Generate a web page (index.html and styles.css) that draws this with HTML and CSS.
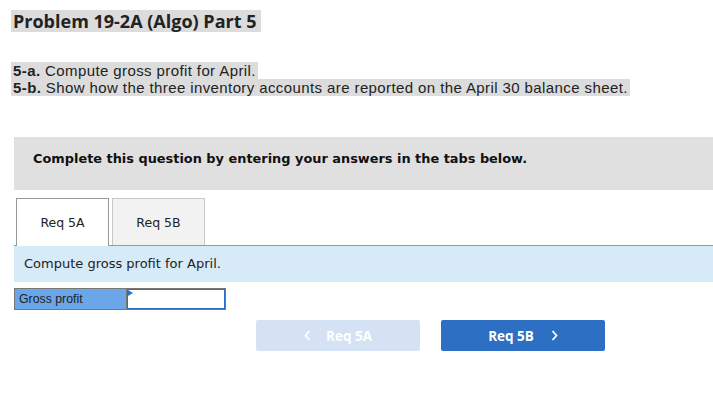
FILE: index.html
```html
<!DOCTYPE html>
<html>
<head>
<meta charset="utf-8">
<link rel="stylesheet" href="styles.css">
</head>
<body>
<div class="page">
  <h1 class="title">Problem 19-2A (Algo) Part 5</h1>
  <div class="intro">
    <div class="line"><b>5-a.</b> Compute gross profit for April.</div>
    <div class="line"><b>5-b.</b> Show how the three inventory accounts are reported on the April 30 balance sheet.</div>
  </div>
  <div class="instructions">Complete this question by entering your answers in the tabs below.</div>
  <div class="tabs">
    <div class="tab active">Req 5A</div>
    <div class="tab">Req 5B</div>
  </div>
  <div class="panel">Compute gross profit for April.</div>
  <div class="entry">
    <div class="label">Gross profit</div>
    <div class="input"><span class="marker"></span></div>
  </div>
  <div class="nav">
    <button class="btn prev"><svg class="chev" width="7" height="11" viewBox="0 0 7 11"><path d="M5.5 1 L1.5 5.5 L5.5 10" fill="none" stroke="#fff" stroke-width="1.8"/></svg><span>Req 5A</span></button>
    <button class="btn next"><span>Req 5B</span><svg class="chev" width="7" height="11" viewBox="0 0 7 11"><path d="M1.5 1 L5.5 5.5 L1.5 10" fill="none" stroke="#fff" stroke-width="1.8"/></svg></button>
  </div>
</div>
</body>
</html>
```
FILE: styles.css
```css
html, body {
  margin: 0;
  padding: 0;
  background: #fff;
}
.page {
  width: 713px;
  padding-top: 10px;
  font-family: "Open Sans", "Liberation Sans", sans-serif;
  color: #222;
}
.title {
  display: block;
  width: fit-content;
  margin: 0 0 0 11px;
  padding: 0 5px 0 2px;
  height: 22px;
  line-height: 22px;
  font-size: 18px;
  font-weight: 700;
  background: #dcdcdc;
}
.intro {
  margin: 30px 0 0 11px;
  font-family: "Liberation Sans", Arial, sans-serif;
  font-size: 15px;
  letter-spacing: 0.4px;
}
.line {
  width: fit-content;
  height: 17px;
  line-height: 17px;
  padding: 0 2px;
  background: #dcdcdc;
}
.instructions {
  margin: 41px 0 0 14px;
  height: 53px;
  box-sizing: border-box;
  padding: 14px 0 0 19px;
  background: #e0e0e0;
  font-family: "DejaVu Sans", Verdana, sans-serif;
  font-weight: 700;
  font-size: 12.9px;
  line-height: 15px;
  color: #111;
}
.tabs {
  display: flex;
  gap: 3px;
  margin: 8px 0 0 14px;
  padding-left: 2px;
  border-bottom: 1px solid #999;
  height: 47px;
}
.tab {
  width: 91px;
  height: 46px;
  box-sizing: content-box;
  border: 1px solid #c8c8c8;
  border-bottom: none;
  background: #f2f2f2;
  font-family: "DejaVu Sans", Verdana, sans-serif;
  font-size: 12.5px;
  display: flex;
  align-items: center;
  justify-content: center;
  color: #222;
}
.tab.active {
  background: #fff;
  border-color: #999;
  height: 47px;
  margin-bottom: -1px;
}
.panel {
  margin-left: 14px;
  height: 36px;
  line-height: 36px;
  padding-left: 10px;
  background: #d7eaf8;
  font-family: "DejaVu Sans", Verdana, sans-serif;
  font-size: 13px;
  color: #222;
}
.entry {
  display: flex;
  margin: 6px 0 0 14px;
  width: 212px;
  height: 22px;
  border: 1px solid #777;
  box-sizing: border-box;
}
.label {
  width: 112px;
  background: #6aa6e8;
  border-right: 1px solid #777;
  font-family: "Liberation Sans", Arial, sans-serif;
  font-size: 12.3px;
  line-height: 20px;
  padding-left: 4px;
  box-sizing: border-box;
  color: #222;
}
.input {
  flex: 1;
  position: relative;
  border: 1px solid #2d70c3;
  background: #fff;
}
.marker {
  position: absolute;
  left: 0;
  top: 0;
  width: 0;
  height: 0;
  border-top: 3px solid transparent;
  border-bottom: 3px solid transparent;
  border-left: 5px solid #2d70c3;
}
.nav {
  display: flex;
  gap: 21px;
  margin: 10px 0 0 256px;
}
.btn {
  width: 164px;
  height: 31px;
  border: none;
  border-radius: 2px;
  font-family: "Open Sans", "Liberation Sans", sans-serif;
  font-weight: 700;
  font-size: 13.5px;
  color: #fff;
  padding: 0;
  display: flex;
  align-items: center;
  justify-content: center;
  gap: 15px;
}
.btn.prev {
  background: #d4e2f3;
}
.btn.next {
  background: #2d70c3;
  gap: 17px;
}
.chev {
  display: block;
}
```
